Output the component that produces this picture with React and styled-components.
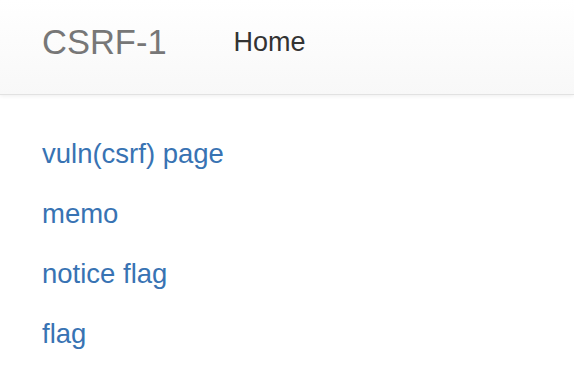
import styled, { createGlobalStyle } from "styled-components";

const GlobalStyle = createGlobalStyle`
  html, body {
    margin: 0;
    padding: 0;
    background: #fff;
    font-family: "Liberation Sans", Arial, Helvetica, sans-serif;
  }
`;

const StyledNavbar = styled.nav`
  display: flex;
  align-items: center;
  height: 95px;
  padding: 0 0 9px 42px;
  box-sizing: border-box;
  border-bottom: 1px solid #e2e2e2;
  background-image: linear-gradient(to bottom, #ffffff 0%, #f8f8f8 100%);
  box-shadow: 0 1px 4px rgba(0, 0, 0, 0.07);
`;

const StyledBrand = styled.a`
  font-size: 34.5px;
  line-height: 1;
  color: #777;
  text-decoration: none;
`;

const StyledNavLink = styled.a`
  margin-left: 67px;
  font-size: 27px;
  line-height: 1;
  color: ${(props) => (props.active ? "#333" : "#777")};
  text-decoration: none;
`;

const StyledMenu = styled.ul`
  list-style: none;
  margin: 0;
  padding: 29px 0 0 42px;
  display: flex;
  flex-direction: column;
  align-items: flex-start;
`;

const StyledMenuLink = styled.a`
  display: block;
  font-size: 27.5px;
  line-height: 60px;
  color: #3873b3;
  text-decoration: none;
`;

const links = ["vuln(csrf) page", "memo", "notice flag", "flag"];

const App = () => {
  return (
    <>
      <GlobalStyle />
      <StyledNavbar>
        <StyledBrand href="#">CSRF-1</StyledBrand>
        <StyledNavLink href="#" active>
          Home
        </StyledNavLink>
      </StyledNavbar>
      <StyledMenu>
        {links.map((label) => (
          <li key={label}>
            <StyledMenuLink href="#">{label}</StyledMenuLink>
          </li>
        ))}
      </StyledMenu>
    </>
  );
};

export default App;
